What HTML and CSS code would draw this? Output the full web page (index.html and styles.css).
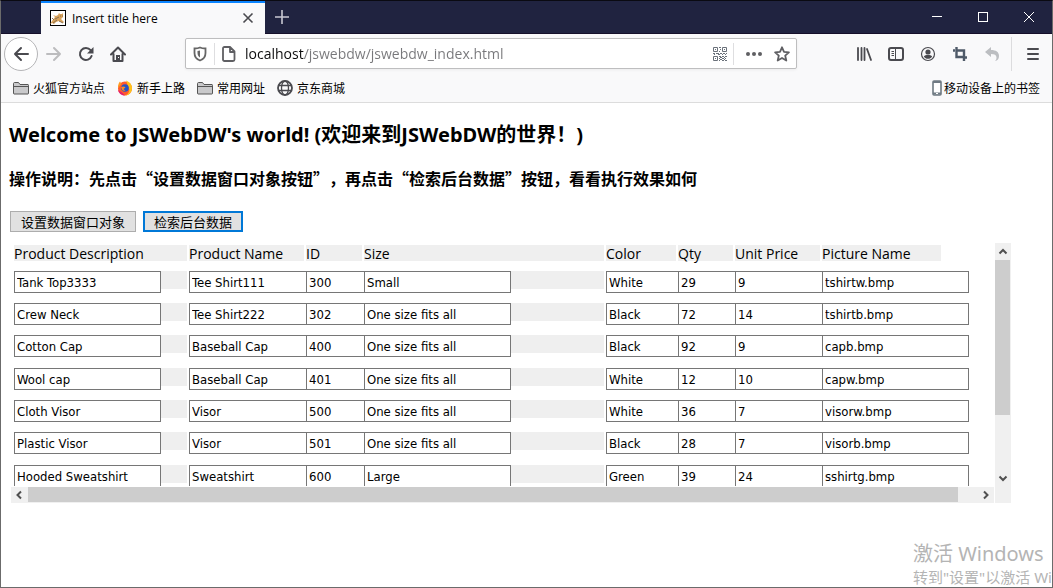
FILE: index.html
```html
<!DOCTYPE html>
<html lang="zh-CN">
<head>
    <meta charset="UTF-8">
    <meta name="viewport" content="width=device-width, initial-scale=1.0">
    <title>Insert title here</title>
    <link rel="stylesheet" href="styles.css">
</head>
<body>

<div class="window">
    <!-- 标题栏 -->
    <header class="titlebar">
        <div class="tab">
            <svg class="favicon" width="16" height="16" viewBox="0 0 16 16">
                <rect x="0.5" y="0.5" width="15" height="15" fill="#fff" stroke="#000"/>
                <path d="M2 11l3-4-2-2 3 1 2-1 1-2 1 1h2l1-1v4l-2 2 3 3-1 1-4-2-3 1-2 2-2-1-2 1z" fill="#d9a35c"/>
                <path d="M2 8l2 2M5 9l4-2M3 13l4-3M10 6h1M12 6h1M9 11l4 2" stroke="#8a7050" fill="none"/>
            </svg>
            <span class="tab-title">Insert title here</span>
            <button class="tab-close" aria-label="Close tab">
                <svg width="12" height="12" viewBox="0 0 12 12"><path d="M1.5 1.5l9 9M10.5 1.5l-9 9" stroke="#4a4a4f" stroke-width="1.6"/></svg>
            </button>
        </div>
        <button class="new-tab" aria-label="New tab">
            <svg width="14" height="14" viewBox="0 0 14 14"><path d="M7 0v14M0 7h14" stroke="#c8c8d2" stroke-width="1.6"/></svg>
        </button>
        <div class="window-buttons">
            <button aria-label="Minimize"><svg width="10" height="10" viewBox="0 0 10 10"><path d="M0 4.5h10" stroke="#fff"/></svg></button>
            <button aria-label="Maximize"><svg width="10" height="10" viewBox="0 0 10 10"><rect x="0.5" y="0.5" width="9" height="9" fill="none" stroke="#fff"/></svg></button>
            <button aria-label="Close"><svg width="10" height="10" viewBox="0 0 10 10"><path d="M0 0l10 10M10 0L0 10" stroke="#fff"/></svg></button>
        </div>
    </header>

    <!-- 导航栏 -->
    <nav class="navbar">
        <button class="back" aria-label="Back">
            <svg width="16" height="16" viewBox="0 0 16 16"><path d="M15 8H2M8 2L2 8l6 6" fill="none" stroke="#4a4a4f" stroke-width="2" stroke-linecap="round" stroke-linejoin="round"/></svg>
        </button>
        <button class="tool" aria-label="Forward">
            <svg width="16" height="16" viewBox="0 0 16 16"><path d="M1 8h13M8 2l6 6-6 6" fill="none" stroke="#bcbcbe" stroke-width="2" stroke-linecap="round" stroke-linejoin="round"/></svg>
        </button>
        <button class="tool" aria-label="Reload">
            <svg width="16" height="16" viewBox="0 0 16 16"><path d="M12.6 4.2A6 6 0 1 0 13.600 10" fill="none" stroke="#4a4a4f" stroke-width="2" stroke-linecap="round"/><path d="M15.5 1v6.5H9z" fill="#4a4a4f"/></svg>
        </button>
        <button class="tool" aria-label="Home">
            <svg width="16" height="16" viewBox="0 0 16 16"><path d="M1 8.5l7-7 7 7M3.5 8v7h9V8" fill="none" stroke="#4a4a4f" stroke-width="2" stroke-linecap="round" stroke-linejoin="round"/><path d="M6 9h4v6H6z" fill="#4a4a4f"/><path d="M8 11h1v1H8z" fill="#fff"/></svg>
        </button>

        <div class="urlbar">
            <svg width="16" height="16" viewBox="0 0 16 16"><path d="M8 1.5c2 1 4 1 5.5 1V7c0 4-2.5 6.5-5.5 7.5C5 13.5 2.5 11 2.5 7V2.5C4 2.5 6 2.5 8 1.5z" fill="none" stroke="#666" stroke-width="1.8"/><path d="M8 4.5v7C6.5 10.5 5.5 9 5.5 7V5z" fill="#666"/></svg>
            <span class="divider"></span>
            <svg width="16" height="16" viewBox="0 0 16 16"><path d="M3.5 1H9l4.5 4.5v8c0 1-.5 1.5-1.5 1.5H3.5C2.5 15 2 14.5 2 13.5v-11C2 1.5 2.5 1 3.5 1zM9 1v5h4.5" fill="none" stroke="#5f5f63" stroke-width="1.8" stroke-linejoin="round"/></svg>
            <input class="url" type="text" aria-label="Address" value="localhost/jswebdw/jswebdw_index.html">
            <svg width="14" height="14" viewBox="0 0 14 14" fill="none" stroke="#6a717a">
                <path d="M.5 .5h4v4h-4zM9.5 .5h4v4h-4zM.5 9.5h4v4h-4z"/>
                <path d="M2 2.5h1M11 2.5h1M2 11.5h1M6 .5h2M7 2.5h1M6 4.5h1M0 6.5h2M3 6.5h3M7 6.5h2M10 6.500h2M13 6.5h1M1 7.500h1M5 7.5h2M9 7.5h1M12 7.5h1M6 9.5h2M9 9.5h2M12 9.5h2M7 10.5h2M11 10.5h1M6 11.5h1M9 11.5h2M12 11.5h1M7 12.5h2M11 12.5h1M6 13.5h1M9 13.500h2M12 13.5h2"/>
            </svg>
            <span class="divider"></span>
            <svg class="dots" width="16" height="16" viewBox="0 0 16 16" fill="#5f5f63"><circle cx="2" cy="8" r="2"/><circle cx="8" cy="8" r="2"/><circle cx="14" cy="8" r="2"/></svg>
            <svg width="16" height="16" viewBox="0 0 16 16"><path d="M8 1.3l2 4.5 4.9.5-3.7 3.3 1.1 4.9L8 12l-4.3 2.5 1.1-4.900L1.1 6.3 6 5.800z" fill="none" stroke="#5f5f63" stroke-width="1.8" stroke-linejoin="round"/></svg>
        </div>

        <button class="tool" aria-label="Library">
            <svg width="16" height="16" viewBox="0 0 16 16"><path d="M2 2v12M5.500 2v12M8.500 2v12M11 3l4 11" stroke="#4a4a4f" stroke-width="1.8" stroke-linecap="round"/></svg>
        </button>
        <button class="tool" aria-label="Sidebar">
            <svg width="16" height="16" viewBox="0 0 16 16"><rect x="1" y="2" width="14" height="12" rx="2" fill="none" stroke="#4a4a4f" stroke-width="2"/><path d="M7.5 2v12M3.5 5.500H6M3.5 7.500H6M3.5 9.500H6" stroke="#4a4a4f"/></svg>
        </button>
        <button class="tool" aria-label="Account">
            <svg width="16" height="16" viewBox="0 0 16 16"><circle cx="8" cy="8" r="6.5" fill="none" stroke="#4a4a4f" stroke-width="1.200"/><circle cx="8" cy="6" r="2.600" fill="#4a4a4f"/><path d="M3.800 10.500c1-1.200 2.200-1.500 4.200-1.500s3.200.3 4.200 1.500c-1 1.700-2.500 2.300-4.200 2.300s-3.200-.6-4.200-2.300z" fill="#4a4a4f"/></svg>
        </button>
        <button class="tool" aria-label="Screenshot">
            <svg width="16" height="16" viewBox="0 0 16 16"><path d="M4.5 1v10h7M1 4.5h2M5 4.5h7V15M12 11.5h3" fill="none" stroke="#4f5a68" stroke-width="2.4"/></svg>
        </button>
        <button class="tool" aria-label="Undo">
            <svg width="16" height="16" viewBox="0 0 16 16"><path d="M1 6l6-5v3c5 0 8 2 8 6 0 3-1.500 4.500-4 5 1-1 1.500-2 1.500-3.500C12.500 9 10.500 8 7 8v3z" fill="#bcbec1"/></svg>
        </button>
        <span class="menu-divider"></span>
        <button class="tool" aria-label="Menu">
            <svg width="16" height="16" viewBox="0 0 16 16"><path d="M3 3h10M3 8h10M3 13h10" stroke="#4a4a4f" stroke-width="2" stroke-linecap="round"/></svg>
        </button>
    </nav>

    <!-- 书签栏 -->
    <div class="bookmarks">
        <a href="#">
            <svg width="16" height="16" viewBox="0 0 16 16"><path d="M.5 3.5c0-.5.5-1 1-1h4l1.500 2h8c.5 0 .5.500.5 1v7.500c0 .5 0 1-.5 1h-14c-.5 0-.5-.5-.5-1z" fill="#c9c9cb" stroke="#555"/><path d="M1 6.5h14" stroke="#555"/></svg>
            <span>火狐官方站点</span>
        </a>
        <a href="#">
            <svg width="16" height="16" viewBox="0 0 16 16"><circle cx="8" cy="8.500" r="7" fill="#ff5a2c"/><path d="M9 .5c4 1.500 6.500 4.500 6 8.500-.5 4-3.500 6.500-7 6.500 3-1 5-4 4-7z" fill="#ffc21c"/><path d="M1 8c0-3 .5-5 2-6.500L4.500 4z" fill="#ff9a1f"/><path d="M1 10c1 4 4 5.500 7 5.500l-3-3z" fill="#e3206d"/><circle cx="8" cy="8" r="3.800" fill="#2454c5"/><path d="M4 7l3-.5 1.500 1-2 1.500 2 2-3-.5z" fill="#ff8a20"/></svg>
            <span>新手上路</span>
        </a>
        <a href="#">
            <svg width="16" height="16" viewBox="0 0 16 16"><path d="M.5 3.5c0-.5.5-1 1-1h4l1.500 2h8c.5 0 .5.500.5 1v7.500c0 .5 0 1-.5 1h-14c-.5 0-.5-.5-.5-1z" fill="#c9c9cb" stroke="#555"/><path d="M1 6.5h14" stroke="#555"/></svg>
            <span>常用网址</span>
        </a>
        <a href="#">
            <svg width="16" height="16" viewBox="0 0 16 16" fill="none" stroke="#4a4a4f"><circle cx="8" cy="8" r="7" stroke-width="1.8"/><ellipse cx="8" cy="8" rx="3.5" ry="7" stroke-width="1.3"/><path d="M1.5 5.500h13M1.500 10.500h13" stroke-width="1.3"/></svg>
            <span>京东商城</span>
        </a>
        <a href="#" class="mobile">
            <svg width="10" height="16" viewBox="0 0 10 16"><rect x="1" y="1" width="8" height="14" rx="1" fill="#fff" stroke="#6f7a83" stroke-width="1.6"/><path d="M1 2h8M1 13.500h8" stroke="#6f7a83" stroke-width="2"/><path d="M4 13.500h2" stroke="#fff"/></svg>
            <span>移动设备上的书签</span>
        </a>
    </div>

    <!-- 页面内容 -->
    <main class="page">
        <h2>Welcome to JSWebDW's world! (欢迎来到JSWebDW的世界！)</h2>
        <h3>操作说明：先点击“设置数据窗口对象按钮”，再点击“检索后台数据”按钮，看看执行效果如何</h3>

        <div class="actions">
            <button>设置数据窗口对象</button>
            <button class="active">检索后台数据</button>
        </div>

        <div class="datawindow">
            <div class="view">
                <table>
                    <colgroup>
                        <col class="c-desc"><col class="c-name"><col class="c-id"><col class="c-size"><col class="c-color"><col class="c-qty"><col class="c-price"><col class="c-pic">
                    </colgroup>
                    <thead>
                        <tr>
                            <th>Product Description</th>
                            <th>Product Name</th>
                            <th>ID</th>
                            <th>Size</th>
                            <th>Color</th>
                            <th>Qty</th>
                            <th>Unit Price</th>
                            <th>Picture Name</th>
                        </tr>
                    </thead>
                    <tbody id="rows"></tbody>
                </table>
            </div>
            <div class="vbar">
                <svg width="16" height="17" viewBox="0 0 16 17"><path d="M4.500 10.500L8 7l3.500 3.500" fill="none" stroke="#505050" stroke-width="2"/></svg>
                <div class="track"><div class="thumb"></div></div>
                <svg width="16" height="17" viewBox="0 0 16 17"><path d="M4.500 6.500L8 10l3.500-3.500" fill="none" stroke="#505050" stroke-width="2"/></svg>
            </div>
            <div class="hbar">
                <svg width="17" height="16" viewBox="0 0 17 16"><path d="M10 4.500L6.500 8l3.500 3.500" fill="none" stroke="#505050" stroke-width="2"/></svg>
                <div class="track"><div class="thumb"></div></div>
                <svg width="17" height="16" viewBox="0 0 17 16"><path d="M7 4.500L10.500 8 7 11.500" fill="none" stroke="#505050" stroke-width="2"/></svg>
            </div>
        </div>
    </main>

    <div class="watermark">
        <p class="big">激活 Windows</p>
        <p class="small">转到"设置"以激活 Wi</p>
    </div>
</div>

<script src="script.js"></script>
</body>
</html>
```
FILE: styles.css
```css
/* 全局样式 */
* {
    box-sizing: border-box;
}

body {
    margin: 0;
    font-family: "Noto Sans", "Noto Sans CJK SC", sans-serif;
    font-size: 12px;
    color: #000;
    background-color: #fff;
}

button {
    padding: 0;
    border: none;
    background: none;
    font-family: inherit;
}

svg {
    display: block;
    flex: none;
}

.window {
    position: relative;
    display: flex;
    flex-direction: column;
    min-height: 100vh;
    border: 1px solid #6b6b6b;
    border-top-color: #0a0a12;
    overflow: hidden;
}

/* 标题栏 */
.titlebar {
    display: flex;
    height: 33px;
    padding-left: 40px;
    background-color: #202340;
    border-bottom: 1px solid #150f2a;
}

.tab {
    display: flex;
    align-items: center;
    width: 224px;
    height: 33px;
    padding: 0 11px 1px 9px;
    background-color: #f9f9fa;
    border-top: 2px solid #0a84ff;
}

.tab-title {
    flex: 1;
    margin-left: 6px;
    font-family: "Open Sans", sans-serif;
}

.new-tab {
    display: flex;
    align-items: center;
    justify-content: center;
    width: 34px;
}

.window-buttons {
    display: flex;
    margin-left: auto;
}

.window-buttons button {
    display: flex;
    align-items: center;
    justify-content: center;
    width: 46px;
}

/* 导航栏 */
.navbar {
    display: flex;
    align-items: center;
    height: 39px;
    padding: 0 3px;
    background-color: #f9f9fa;
}

.back {
    display: flex;
    align-items: center;
    justify-content: center;
    width: 34px;
    height: 34px;
    border: 1px solid #b5b5b7;
    border-radius: 50%;
    background-color: #fff;
}

.tool {
    display: flex;
    align-items: center;
    justify-content: center;
    width: 32px;
    height: 32px;
}

.urlbar {
    flex: 1;
    display: flex;
    align-items: center;
    gap: 6px;
    height: 31px;
    margin: 0 51px;
    padding: 0 6px;
    border: 1px solid #bebebf;
    border-radius: 2px;
    background-color: #fff;
    box-shadow: 0 1px 3px rgba(0, 0, 0, 0.06);
}

.divider {
    width: 1px;
    height: 22px;
    background-color: #dedee0;
}

/* 域名为黑色，其余路径为灰色 */
.url {
    flex: 1;
    min-width: 0;
    padding: 0 0 0 2px;
    border: none;
    outline: none;
    font-family: "Open Sans", sans-serif;
    font-size: 14px;
    color: transparent;
    background: linear-gradient(to right, #0c0c0d 61px, #77777a 61px);
    -webkit-background-clip: text;
    background-clip: text;
}

.dots {
    margin: 0 6px;
}

.menu-divider {
    width: 1px;
    height: 34px;
    margin: 0 5px 0 3px;
    background-color: #dcdcde;
}

/* 书签栏 */
.bookmarks {
    display: flex;
    align-items: center;
    gap: 12px;
    height: 30px;
    padding: 0 12px;
    background-color: #f9f9fa;
    border-bottom: 1px solid #dcdcdc;
}

.bookmarks a {
    display: flex;
    align-items: center;
    gap: 4px;
    color: #000;
    text-decoration: none;
    font-family: "Noto Sans CJK SC", sans-serif;
    line-height: 16px;
}

.bookmarks .mobile {
    gap: 2px;
    margin-left: auto;
}

/* 页面内容 */
.page {
    flex: 1;
    padding: 19px 41px 0 8px;
}

h2 {
    margin: 0 0 19px;
    font-size: 20px;
    line-height: 26px;
}

h3 {
    margin: 0 0 22px;
    font-family: "Noto Sans CJK SC", sans-serif;
    font-size: 16px;
    line-height: 22px;
    text-spacing-trim: space-all;
}

.actions {
    display: flex;
    gap: 7px;
    padding-left: 1px;
    margin-bottom: 11px;
}

.actions button {
    height: 21px;
    padding: 0 10px;
    border: 1px solid #adadad;
    background-color: #e1e1e1;
    font-family: "Noto Sans CJK SC", sans-serif;
    font-size: 13px;
    line-height: 18px;
}

.actions .active {
    padding: 0 9px;
    border: 2px solid #0078d7;
}

/* 数据窗口 */
.datawindow {
    display: grid;
    grid-template-columns: 1fr 16px;
    grid-template-rows: 243px 16px;
    column-gap: 1px;
    row-gap: 1px;
    margin-left: 2px;
}

.view {
    overflow: hidden;
    padding: 2px 0 0 3px;
}

table {
    table-layout: fixed;
    width: 929px;
    border-collapse: separate;
    border-spacing: 0;
}

.c-desc { width: 175px; }
.c-name { width: 117px; }
.c-id { width: 58px; }
.c-size { width: 242px; }
.c-color { width: 72px; }
.c-qty { width: 57px; }
.c-price { width: 87px; }
.c-pic { width: 121px; }

th, td {
    padding: 0;
    border-right: 2px solid #fff;
    text-align: left;
    vertical-align: top;
    white-space: nowrap;
    background: linear-gradient(#efefef, #efefef) no-repeat;
}

th {
    height: 26px;
    font-family: "Open Sans", sans-serif;
    font-size: 14px;
    font-weight: normal;
    line-height: 18px;
    background-size: 100% 16px;
}

td {
    height: 32px;
    background-size: 100% 18px;
}

tbody tr:nth-child(3n) td {
    height: 33px;
}

/* 输入框宽度固定，后一列覆盖前一列 */
td input {
    display: inline-block;
    vertical-align: top;
    width: 147px;
    height: 22px;
    padding: 1px 2px 0;
    border: 1px solid #767676;
    background-color: #fff;
    font-family: "DejaVu Sans Condensed", "DejaVu Sans", sans-serif;
    font-size: 13px;
}

/* 滚动条 */
.vbar, .hbar {
    display: flex;
    background-color: #f0f0f0;
}

.vbar {
    grid-column: 2;
    grid-row: 1 / 3;
    flex-direction: column;
    padding-bottom: 16px;
}

.hbar {
    grid-column: 1;
    grid-row: 2;
}

.track {
    flex: 1;
}

.thumb {
    background-color: #cdcdcd;
}

.vbar .thumb {
    width: 15px;
    height: 74%;
}

.hbar .thumb {
    width: 98%;
    height: 15px;
}

/* 系统水印 */
.watermark {
    position: absolute;
    right: 0;
    bottom: 0;
    width: 139px;
    color: #b4b4b4;
    white-space: nowrap;
    pointer-events: none;
}

.watermark p {
    margin: 0;
}

.watermark .big {
    font-size: 20px;
    line-height: 26px;
}

.watermark .small {
    font-size: 15px;
    line-height: 20px;
}
```
FILE: script.js
```js
const columns = ["Product Description", "Product Name", "ID", "Size", "Color", "Qty", "Unit Price", "Picture Name"];

const products = [
    ["Tank Top3333", "Tee Shirt111", "300", "Small", "White", "29", "9", "tshirtw.bmp"],
    ["Crew Neck", "Tee Shirt222", "302", "One size fits all", "Black", "72", "14", "tshirtb.bmp"],
    ["Cotton Cap", "Baseball Cap", "400", "One size fits all", "Black", "92", "9", "capb.bmp"],
    ["Wool cap", "Baseball Cap", "401", "One size fits all", "White", "12", "10", "capw.bmp"],
    ["Cloth Visor", "Visor", "500", "One size fits all", "White", "36", "7", "visorw.bmp"],
    ["Plastic Visor", "Visor", "501", "One size fits all", "Black", "28", "7", "visorb.bmp"],
    ["Hooded Sweatshirt", "Sweatshirt", "600", "Large", "Green", "39", "24", "sshirtg.bmp"]
];

const tbody = document.getElementById("rows");

products.forEach(product => {
    const row = tbody.insertRow();
    product.forEach((value, i) => {
        const input = document.createElement("input");
        input.type = "text";
        input.value = value;
        input.setAttribute("aria-label", columns[i]);
        row.insertCell().appendChild(input);
    });
});
```
